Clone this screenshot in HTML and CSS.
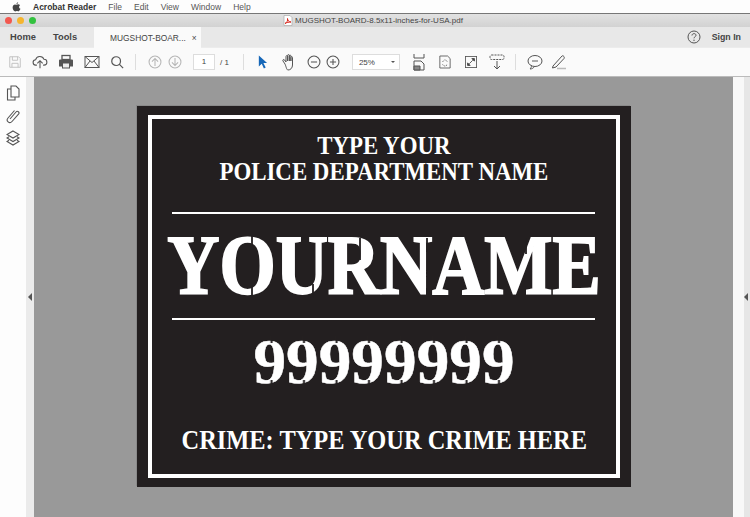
FILE: index.html
```html
<!DOCTYPE html>
<html lang="en">
<head>
  <meta charset="UTF-8">
  <title>MUGSHOT-BOARD-8.5x11-inches-for-USA.pdf</title>
  <link rel="stylesheet" href="styles.css">
</head>
<body>
  <div class="menubar">
    <svg class="apple" viewBox="0 0 14 16"><path d="M9.6 0.5c.1 1.2-1 2.8-2.6 2.9C6.800 2.100 8 .7 9.600 .5zM7 4.300c.7 0 1.500-.7 2.900-.7 1 0 2.100.5 2.800 1.500-2.400 1.400-2 4.800.6 5.800-.7 1.800-2 4.100-3.400 4.100-.9 0-1.300-.6-2.500-.6s-1.700.6-2.500.6C3.100 15 .8 11.700.8 8.700c0-3 2-4.900 3.800-4.900C5.700 3.800 6.400 4.300 7 4.300z"/></svg>
    <span class="app-name">Acrobat Reader</span>
    <span class="menu-item">File</span>
    <span class="menu-item">Edit</span>
    <span class="menu-item">View</span>
    <span class="menu-item">Window</span>
    <span class="menu-item">Help</span>
  </div>

  <div class="titlebar">
    <div class="lights">
      <span class="light light-red"></span>
      <span class="light light-yellow"></span>
      <span class="light light-green"></span>
    </div>
    <svg class="pdf-icon" viewBox="0 0 10 11"><path d="M1 .5h6l2 2v8H1z" fill="#fff" stroke="#aaa" stroke-width=".7"/><path d="M2 8.500c2-1 3-3 2.500-5 0 2 1.500 3.500 3.500 3.500-2 0-4.500.5-6 1.500z" fill="none" stroke="#d8261c"/></svg>
    <span class="doc-title">MUGSHOT-BOARD-8.5x11-inches-for-USA.pdf</span>
  </div>

  <div class="tabbar">
    <span class="nav-tab nav-home">Home</span>
    <span class="nav-tab nav-tools">Tools</span>
    <div class="doc-tab">
      <span>MUGSHOT-BOAR...</span>
      <span class="tab-close">×</span>
    </div>
    <div class="tabbar-right">
      <svg class="help-icon" viewBox="0 0 14 14"><circle cx="7" cy="7" r="6" fill="none" stroke="#555"/><path d="M5 5.500c0-2.500 4-2.500 4-.2 0 1.400-2 1.400-2 3" fill="none" stroke="#555"/><circle cx="7" cy="10.200" r=".7" fill="#555"/></svg>
      <span class="sign-in">Sign In</span>
    </div>
  </div>

  <div class="toolbar">
    <svg class="tool tool-save" viewBox="0 0 16 16" fill="none" stroke="#bdbdbd"><path d="M2 2h10l2 2v10H2z"/><path d="M5 2v4h6V2M4.500 14V9.500h7V14"/></svg>
    <svg class="tool tool-upload" viewBox="0 0 18 16" fill="none" stroke="#555" stroke-width="1.200"><path d="M5.500 11.500H4.500a3 3 0 0 1-.5-6 5 5 0 0 1 9.500-.5 3.200 3.200 0 0 1 0 6.500h-1"/><path d="M9 15V7M6 9.500L9 6.500l3 3"/></svg>
    <svg class="tool tool-print" viewBox="0 0 16 16"><rect x="4" y="1.500" width="8" height="4" fill="none" stroke="#555" stroke-width="1.300"/><path d="M1 6.500q0-1 1-1h12q1 0 1 1v6h-3v2H4v-2H1z" fill="#555"/><rect x="5" y="9.500" width="6" height="4" fill="#eee"/></svg>
    <svg class="tool tool-mail" viewBox="0 0 16 14" fill="none" stroke="#555"><rect x="1" y="1.500" width="14" height="11"/><path d="M1 1.500l7 6 7-6M1 12.500l5-6.500M15 12.500L10 6"/></svg>
    <svg class="tool tool-search" viewBox="0 0 16 16" fill="none" stroke="#555" stroke-width="1.400"><circle cx="7" cy="7" r="5"/><path d="M10.500 10.500L15 15"/></svg>
    <span class="tool-sep sep-a"></span>
    <svg class="tool tool-up" viewBox="0 0 16 16" fill="none" stroke="#b5b5b5" stroke-width="1.200"><circle cx="8" cy="8" r="6.800"/><path d="M8 12.500V4M4.500 7.500L8 4l3.500 3.500"/></svg>
    <svg class="tool tool-down" viewBox="0 0 16 16" fill="none" stroke="#b5b5b5" stroke-width="1.200"><circle cx="8" cy="8" r="6.800"/><path d="M8 3.500V12M4.500 8.500L8 12l3.500-3.500"/></svg>
    <span class="page-box">1</span>
    <span class="page-total">/ 1</span>
    <span class="tool-sep sep-b"></span>
    <svg class="tool tool-arrow" viewBox="0 0 12 16"><path d="M2 1l9 8H7l2.500 5-2 1L5.200 10 2 13z" fill="#1667b8"/></svg>
    <svg class="tool tool-hand" viewBox="0 0 16 18" fill="none" stroke="#555"><path d="M4 11L2 8c-.8-1.300.8-2 1.600-1L5 9V3.500c0-1.200 1.600-1.200 1.600 0V8 2.500c0-1.200 1.700-1.200 1.700 0V8 3c0-1.200 1.600-1.200 1.600 0v5-3.500c0-1.200 1.600-1.200 1.600 0V12c0 3-2 5-4.500 5C5.500 17 5 13 4 11z"/></svg>
    <svg class="tool tool-minus" viewBox="0 0 16 16" fill="none" stroke="#555" stroke-width="1.200"><circle cx="8" cy="8" r="6.800"/><path d="M4.500 8h7"/></svg>
    <svg class="tool tool-plus" viewBox="0 0 16 16" fill="none" stroke="#555" stroke-width="1.200"><circle cx="8" cy="8" r="6.800"/><path d="M4.500 8h7M8 4.500v7"/></svg>
    <div class="zoom-box"><span>25%</span><span class="zoom-caret"></span></div>
    <svg class="tool tool-fit" viewBox="0 0 16 18" fill="none" stroke="#555"><path d="M3 1v4h10V1M3 17V8h7l3 3v6z"/><path d="M3 13h6v4H3z" fill="#888"/></svg>
    <svg class="tool tool-rotate" viewBox="0 0 14 16" fill="none" stroke="#555"><path d="M1 1h9l3 3v11H1z"/><path d="M4 8l3-3 3 3M4 11l3 2 3-2" stroke-dasharray="1.500 1"/></svg>
    <svg class="tool tool-full" viewBox="0 0 14 14"><rect x=".5" y=".5" width="13" height="13" fill="none" stroke="#555"/><path d="M8 3h3v3zM6 11H3V8zM5 9l4-4" fill="#444" stroke="#444"/></svg>
    <svg class="tool tool-scroll" viewBox="0 0 16 16" fill="none" stroke="#555"><rect x="1" y="1" width="14" height="4.500" rx="1.500" stroke-dasharray="2 1"/><path d="M8 7v8M5 12l3 3 3-3"/></svg>
    <span class="tool-sep sep-c"></span>
    <svg class="tool tool-comment" viewBox="0 0 16 16" fill="none" stroke="#555"><ellipse cx="8" cy="7" rx="7" ry="5.500"/><path d="M4.500 11.500c0 1.500-.5 2.500-1.500 3.500 2 0 3.500-1 4.500-2.500"/><path d="M5 7h6" stroke="#aaa" stroke-width="2"/></svg>
    <svg class="tool tool-pen" viewBox="0 0 16 16" fill="none" stroke="#555"><path d="M2 12L11 2c1-1 3 1 2 2.500L5 13l-3.500 1z"/><path d="M6 14.500h9" stroke="#bbb" stroke-width="1.500"/></svg>
  </div>

  <div class="workspace">
    <div class="sidebar">
      <svg class="side-icon" viewBox="0 0 14 16" fill="none" stroke="#555" stroke-width="1.100"><path d="M5 1h5l3 3v8H5z"/><path d="M5 4H1.500v11H9v-3"/></svg>
      <svg class="side-icon" viewBox="0 0 14 16" fill="none" stroke="#555" stroke-width="1.100"><path d="M4 11l6-7c1.500-1.700 4 .3 2.500 2.200L6 13.500c-2.500 2.800-6.500-.5-4-3.500L8.500 2.500"/></svg>
      <svg class="side-icon" viewBox="0 0 14 16" fill="none" stroke="#555" stroke-width="1.100"><path d="M7 1l6 3.500L7 8 1 4.500zM3 6.800L1 8l6 3.500L13 8l-2-1.200M3 10.300L1 11.500 7 15l6-3.500-2-1.200"/></svg>
    </div>
    <div class="gutter gutter-left"><span class="gutter-arrow"></span></div>
    <div class="canvas">
      <div class="sign">
        <div class="sign-frame">
          <div class="dept">
            <div>TYPE YOUR</div>
            <div>POLICE DEPARTMENT NAME</div>
          </div>
          <div class="rule rule-top"></div>
          <div class="name">YOURNAME</div>
          <div class="rule rule-bottom"></div>
          <div class="number">99999999</div>
          <div class="crime">CRIME: TYPE YOUR CRIME HERE</div>
        </div>
        <!-- stencil breaks over the big letters, coords are sign pixels -->
        <svg class="stencil-cuts" viewBox="0 0 494 381">
          <defs>
            <pattern id="digit-cut" x="118" y="0" width="32.5" height="381" patternUnits="userSpaceOnUse">
              <rect x="15.500" width="2" height="381" fill="#231f20"/>
            </pattern>
          </defs>
          <path d="M115 128v12M115 180v12M176 178v14M223 132v22M290 132v14M389 132v16" stroke="#231f20" stroke-width="1.800"/>
          <rect x="118" y="230" width="260" height="7" fill="url(#digit-cut)"/>
          <rect x="118" y="274" width="260" height="8" fill="url(#digit-cut)"/>
        </svg>
      </div>
    </div>
    <div class="gutter gutter-right"><span class="gutter-arrow"></span></div>
  </div>
</body>
</html>
```

FILE: styles.css
```css
* {
  margin: 0;
  padding: 0;
  box-sizing: border-box;
}

html, body {
  height: 517px;
  overflow: hidden;
}

body {
  font-family: "Liberation Sans", Arial, sans-serif;
  background: #999;
  color: #444;
}

.menubar {
  height: 13px;
  background: #fdfdfd;
  display: flex;
  align-items: center;
  font-size: 8.5px;
  color: #555;
}

.apple {
  width: 9px;
  height: 10px;
  margin-left: 12px;
  fill: #444;
}

.app-name {
  margin-left: 12px;
  font-weight: bold;
  color: #333;
}

.menu-item {
  margin-left: 12px;
}

.titlebar {
  height: 14px;
  border-top: 1px solid #777;
  background: linear-gradient(#e2e2e2, #d2d2d2);
  display: flex;
  align-items: center;
  position: relative;
  font-size: 8px;
  color: #444;
}

.lights {
  position: absolute;
  left: 5px;
  top: 3px;
  display: flex;
  gap: 5px;
}

.light {
  width: 7px;
  height: 7px;
  border-radius: 50%;
}

.light-red { background: #f2584f; }
.light-yellow { background: #f5b52e; }
.light-green { background: #33c23f; }

.pdf-icon {
  width: 10px;
  height: 11px;
  margin-left: 283px;
}

.doc-title {
  margin-left: 2px;
  white-space: nowrap;
}

.tabbar {
  height: 21px;
  background: #e8e8e8;
  display: flex;
  align-items: center;
  font-size: 9.3px;
  font-weight: bold;
  border-bottom: 1px solid #ececec;
}

.nav-home { margin-left: 10px; width: 26px; }
.nav-tools { margin-left: 17px; width: 23px; }

.doc-tab {
  align-self: stretch;
  width: 107px;
  margin-left: 18px;
  margin-bottom: -1px;
  background: #fafafa;
  display: flex;
  align-items: center;
  padding-left: 16px;
  font-size: 8.4px;
  font-weight: normal;
  white-space: nowrap;
}

.tab-close {
  margin-left: 6px;
}

.tabbar-right {
  margin-left: auto;
  display: flex;
  align-items: center;
  padding-right: 9px;
}

.help-icon {
  width: 14px;
  height: 14px;
}

.sign-in {
  margin-left: 11px;
  font-size: 8.8px;
}

.toolbar {
  height: 29px;
  background: #fafafa;
  border-bottom: 1px solid #bbb;
  display: flex;
  align-items: center;
  padding-left: 8px;
}

.tool {
  flex: none;
  height: 16px;
  width: 16px;
}

.tool-save { width: 14px; height: 14px; }
.tool-upload { margin-left: 10px; }
.tool-print { margin-left: 10px; }
.tool-mail { margin-left: 10px; }
.tool-search { margin-left: 10px; width: 14px; height: 14px; }
.tool-up { margin-left: 12px; width: 14px; height: 14px; }
.tool-down { margin-left: 6px; width: 14px; height: 14px; }
.tool-arrow { margin-left: 13px; width: 11px; }
.tool-hand { margin-left: 13px; height: 18px; }
.tool-minus { margin-left: 10px; width: 14px; height: 14px; }
.tool-plus { margin-left: 5px; width: 14px; height: 14px; }
.tool-fit { margin-left: 11px; height: 18px; }
.tool-rotate { margin-left: 12px; width: 12px; height: 14px; }
.tool-full { margin-left: 14px; width: 12px; height: 12px; }
.tool-scroll { margin-left: 12px; }
.tool-comment { margin-left: 11px; }
.tool-pen { margin-left: 8px; }

.tool-sep {
  flex: none;
  width: 1px;
  height: 16px;
  background: #ddd;
}

.sep-a { margin-left: 11px; }
.sep-b { margin-left: 14px; }
.sep-c { margin-left: 10px; }

.page-box {
  flex: none;
  width: 22px;
  height: 16px;
  margin-left: 11px;
  background: #fff;
  border: 1px solid #ddd;
  font-size: 8px;
  line-height: 14px;
  text-align: center;
}

.page-total {
  margin-left: 5px;
  font-size: 8px;
}

.zoom-box {
  flex: none;
  width: 48px;
  height: 16px;
  margin-left: 12px;
  background: #fff;
  border: 1px solid #ddd;
  display: flex;
  align-items: center;
  justify-content: space-between;
  padding: 0 4px 0 6px;
  font-size: 8px;
}

.zoom-caret {
  border-top: 2px solid #555;
  border-left: 2px solid transparent;
  border-right: 2px solid transparent;
}

.workspace {
  display: flex;
  height: 440px;
}

.sidebar {
  width: 26px;
  background: #fdfdfd;
  display: flex;
  flex-direction: column;
  align-items: center;
  padding-top: 8px;
  gap: 6.5px;
}

.side-icon {
  flex: none;
  width: 14px;
  height: 16px;
}

.gutter {
  flex: none;
  background: #ebebeb;
  display: flex;
  align-items: center;
  justify-content: center;
}

.gutter-left {
  width: 8px;
}

.gutter-right {
  width: 17px;
  background: linear-gradient(90deg, #f8f8f8 11px, #e6e6e6 11px);
}

.gutter-arrow {
  border-top: 4px solid transparent;
  border-bottom: 4px solid transparent;
  border-right: 4px solid #555;
}

.gutter-right .gutter-arrow {
  margin-left: 9px;
}

.canvas {
  flex: 1;
  background: #999;
  padding: 29px 0 0 103px;
}

.sign {
  position: relative;
  width: 494px;
  height: 381px;
  padding: 9px 11px;
  background: #231f20;
  box-shadow: -1px -1px 0 #8a8a8a;
}

.stencil-cuts {
  position: absolute;
  left: 0;
  top: 0;
  width: 494px;
  height: 381px;
}

.sign-frame {
  height: 100%;
  border: 4px solid #fff;
  display: flex;
  flex-direction: column;
  align-items: center;
  font-family: "Liberation Serif", "Times New Roman", serif;
  font-weight: bold;
  color: #fff;
  white-space: nowrap;
}

.dept {
  margin-top: 14px;
  font-size: 26px;
  line-height: 26px;
  text-align: center;
  transform: scaleX(.88);
}

.rule {
  width: 423px;
  height: 2px;
  margin-right: 2px;
  background: #fff;
  flex: none;
}

.rule-top { margin-top: 27px; }
.rule-bottom { margin-top: 11px; }

.name {
  margin-top: 11px;
  font-size: 84px;
  line-height: 82px;
  -webkit-text-stroke: 2px #fff;
  transform: scaleX(.86);
}

.number {
  margin-top: 6px;
  font-size: 64px;
  line-height: 72px;
  -webkit-text-stroke: .5px #fff;
  transform: scaleX(1.02);
}

.crime {
  margin-top: 27px;
  font-size: 27px;
  line-height: 30px;
  transform: scaleX(.904);
}
```
